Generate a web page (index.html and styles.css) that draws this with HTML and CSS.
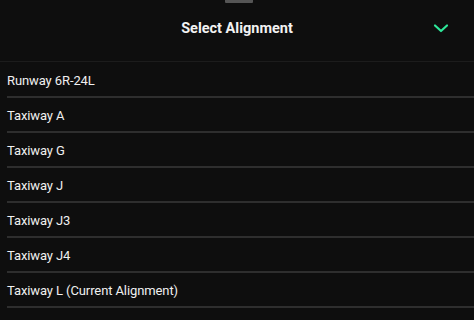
FILE: index.html
```html
<!DOCTYPE html>
<html>
<head>
<meta charset="utf-8">
<link rel="stylesheet" href="styles.css">
</head>
<body>
<div class="sheet">
  <div class="handle"></div>
  <header class="header">
    <h1 class="title">Select Alignment</h1>
    <svg class="chevron" width="16" height="10" viewBox="0 0 16 10"><path d="M2 2.5 L8 8 L14 2.5" fill="none" stroke="#2ee89a" stroke-width="2.2" stroke-linecap="round" stroke-linejoin="round"/></svg>
  </header>
  <ul class="list">
    <li class="item">Runway 6R-24L</li>
    <li class="item">Taxiway A</li>
    <li class="item">Taxiway G</li>
    <li class="item">Taxiway J</li>
    <li class="item">Taxiway J3</li>
    <li class="item">Taxiway J4</li>
    <li class="item">Taxiway L (Current Alignment)</li>
  </ul>
</div>
</body>
</html>
```
FILE: styles.css
```css
html, body {
  margin: 0;
  padding: 0;
  background: #0e0e0e;
}
body {
  width: 474px;
  height: 320px;
  overflow: hidden;
  font-family: Roboto, "Liberation Sans", sans-serif;
  color: #e6e6e6;
}
.sheet {
  display: flex;
  flex-direction: column;
  position: relative;
}
.handle {
  position: absolute;
  left: 225px;
  top: 0;
  width: 28px;
  height: 3px;
  background: #555555;
  border-radius: 0 0 1px 1px;
}
.header {
  height: 61px;
  border-bottom: 1px solid #1c1c1c;
  display: flex;
  align-items: center;
  justify-content: center;
  position: relative;
}
.title {
  margin: 0;
  margin-top: -4px;
  font-size: 14.5px;
  font-weight: 700;
  color: #f2f2f2;
}
.chevron {
  position: absolute;
  right: 25px;
  top: 23px;
}
.list {
  list-style: none;
  margin: 0;
  padding: 1px 0 0 7px;
}
.item {
  box-sizing: border-box;
  height: 35px;
  padding-top: 1px;
  border-bottom: 2px solid #2e2e2e;
  display: flex;
  align-items: center;
  font-size: 13px;
  letter-spacing: -0.1px;
  color: #f0f0f0;
}
```
